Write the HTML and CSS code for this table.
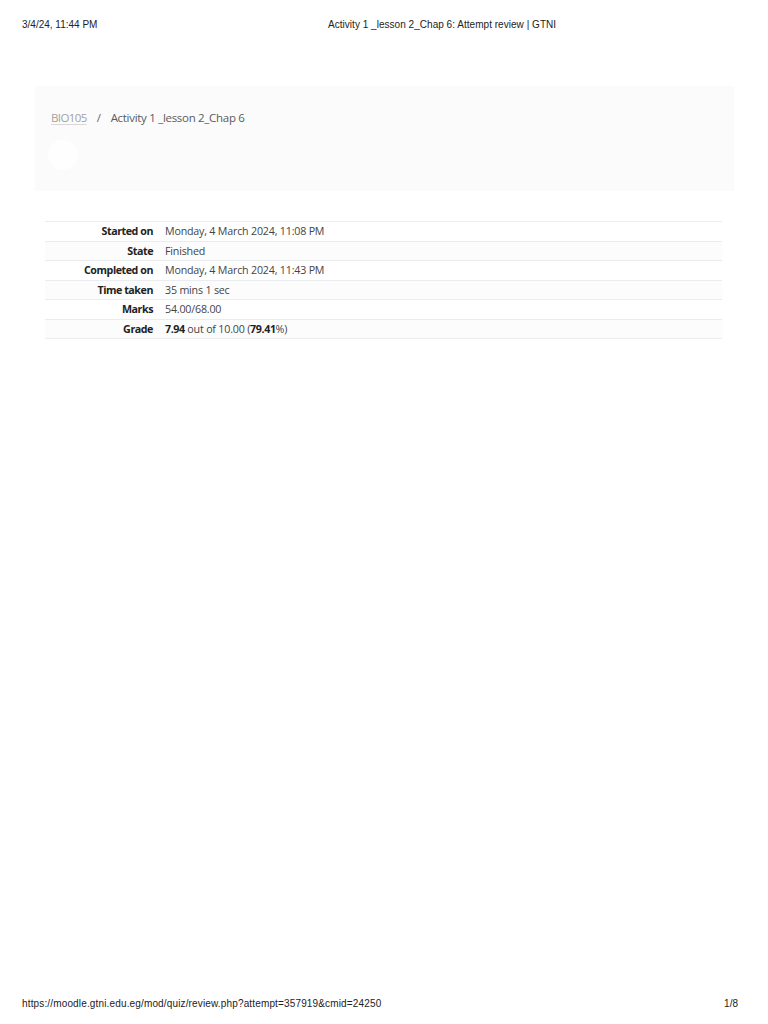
FILE: index.html
```html
<!DOCTYPE html>
<html lang="en">
<head>
<meta charset="utf-8">
<title>Activity 1 _lesson 2_Chap 6: Attempt review | GTNI</title>
<link rel="stylesheet" href="styles.css">
</head>
<body>
<div class="page">
  <header class="print-head">
    <span class="ph-date">3/4/24, 11:44 PM</span>
    <span class="ph-title">Activity 1 _lesson 2_Chap 6: Attempt review | GTNI</span>
  </header>

  <section class="page-header">
    <nav class="breadcrumb">
      <a class="crumb-link">BIO105</a>
      <span class="crumb-sep">/</span>
      <span class="crumb-current">Activity 1 _lesson 2_Chap 6</span>
    </nav>
    <div class="avatar"></div>
  </section>

  <table class="summary">
    <tbody>
      <tr><th>Started on</th><td>Monday, 4 March 2024, 11:08 PM</td></tr>
      <tr class="alt"><th>State</th><td>Finished</td></tr>
      <tr><th>Completed on</th><td>Monday, 4 March 2024, 11:43 PM</td></tr>
      <tr class="alt"><th>Time taken</th><td>35 mins 1 sec</td></tr>
      <tr><th>Marks</th><td>54.00/68.00</td></tr>
      <tr class="alt"><th>Grade</th><td><b>7.94</b> out of 10.00 (<b>79.41</b>%)</td></tr>
    </tbody>
  </table>

  <footer class="print-foot">
    <span class="pf-url">https://moodle.gtni.edu.eg/mod/quiz/review.php?attempt=357919&amp;cmid=24250</span>
    <span>1/8</span>
  </footer>
</div>
</body>
</html>
```

FILE: styles.css
```css
html, body {
  margin: 0;
  padding: 0;
  background: #fff;
}

.page {
  min-height: 1024px;
  display: flex;
  flex-direction: column;
  box-sizing: border-box;
}

.print-head {
  display: flex;
  align-items: baseline;
  padding: 18px 22px 0 22px;
  font-family: "Liberation Sans", Arial, sans-serif;
  font-size: 10px;
  color: #222;
  line-height: 13px;
}

.ph-date {
  width: 306px;
}

.ph-title {
  letter-spacing: 0.03px;
}

.print-foot {
  margin-top: auto;
  display: flex;
  justify-content: space-between;
  padding: 0 30px 14px 22px;
  font-family: "Liberation Sans", Arial, sans-serif;
  font-size: 10px;
  color: #222;
  line-height: 13px;
}

.pf-url {
  letter-spacing: 0.15px;
}

.page-header {
  margin: 55px 34px 0 35px;
  height: 105px;
  background: #fbfbfb;
  padding: 24px 16px 0 16px;
  box-sizing: border-box;
}

.breadcrumb {
  display: flex;
  align-items: baseline;
  font-family: "Open Sans", sans-serif;
  font-size: 11.5px;
  letter-spacing: -0.3px;
  line-height: 16px;
}

.crumb-link {
  color: #a2a2a2;
  letter-spacing: -0.6px;
  text-decoration: underline;
  text-decoration-color: #d8d8d8;
  text-underline-offset: 2px;
}

.crumb-sep {
  color: #666;
  margin: 0 10px 0 10px;
}

.crumb-current {
  color: #5a5a5a;
}

.avatar {
  margin: 14px 0 0 -3px;
  width: 30px;
  height: 30px;
  border-radius: 50%;
  background: #fefefe;
}

.summary {
  margin: 30px 46px 0 45px;
  border-collapse: collapse;
  font-family: "Open Sans", sans-serif;
  font-size: 10.7px;
  letter-spacing: -0.2px;
  color: #333;
  width: 677px;
}

.summary tr {
  border-top: 1px solid #eaedf0;
  height: 19.5px;
}

.summary tr:last-child {
  border-bottom: 1px solid #eaedf0;
}

.summary tr.alt {
  background: #fcfcfc;
}

.summary th {
  width: 108px;
  text-align: right;
  font-weight: 700;
  letter-spacing: -0.45px;
  padding: 0 6px 0 0;
  color: #222;
  white-space: nowrap;
}

.summary td {
  padding: 0 0 0 6px;
  text-align: left;
  color: #444;
}

.summary td b {
  font-weight: 700;
  letter-spacing: -0.4px;
  color: #222;
}
```
